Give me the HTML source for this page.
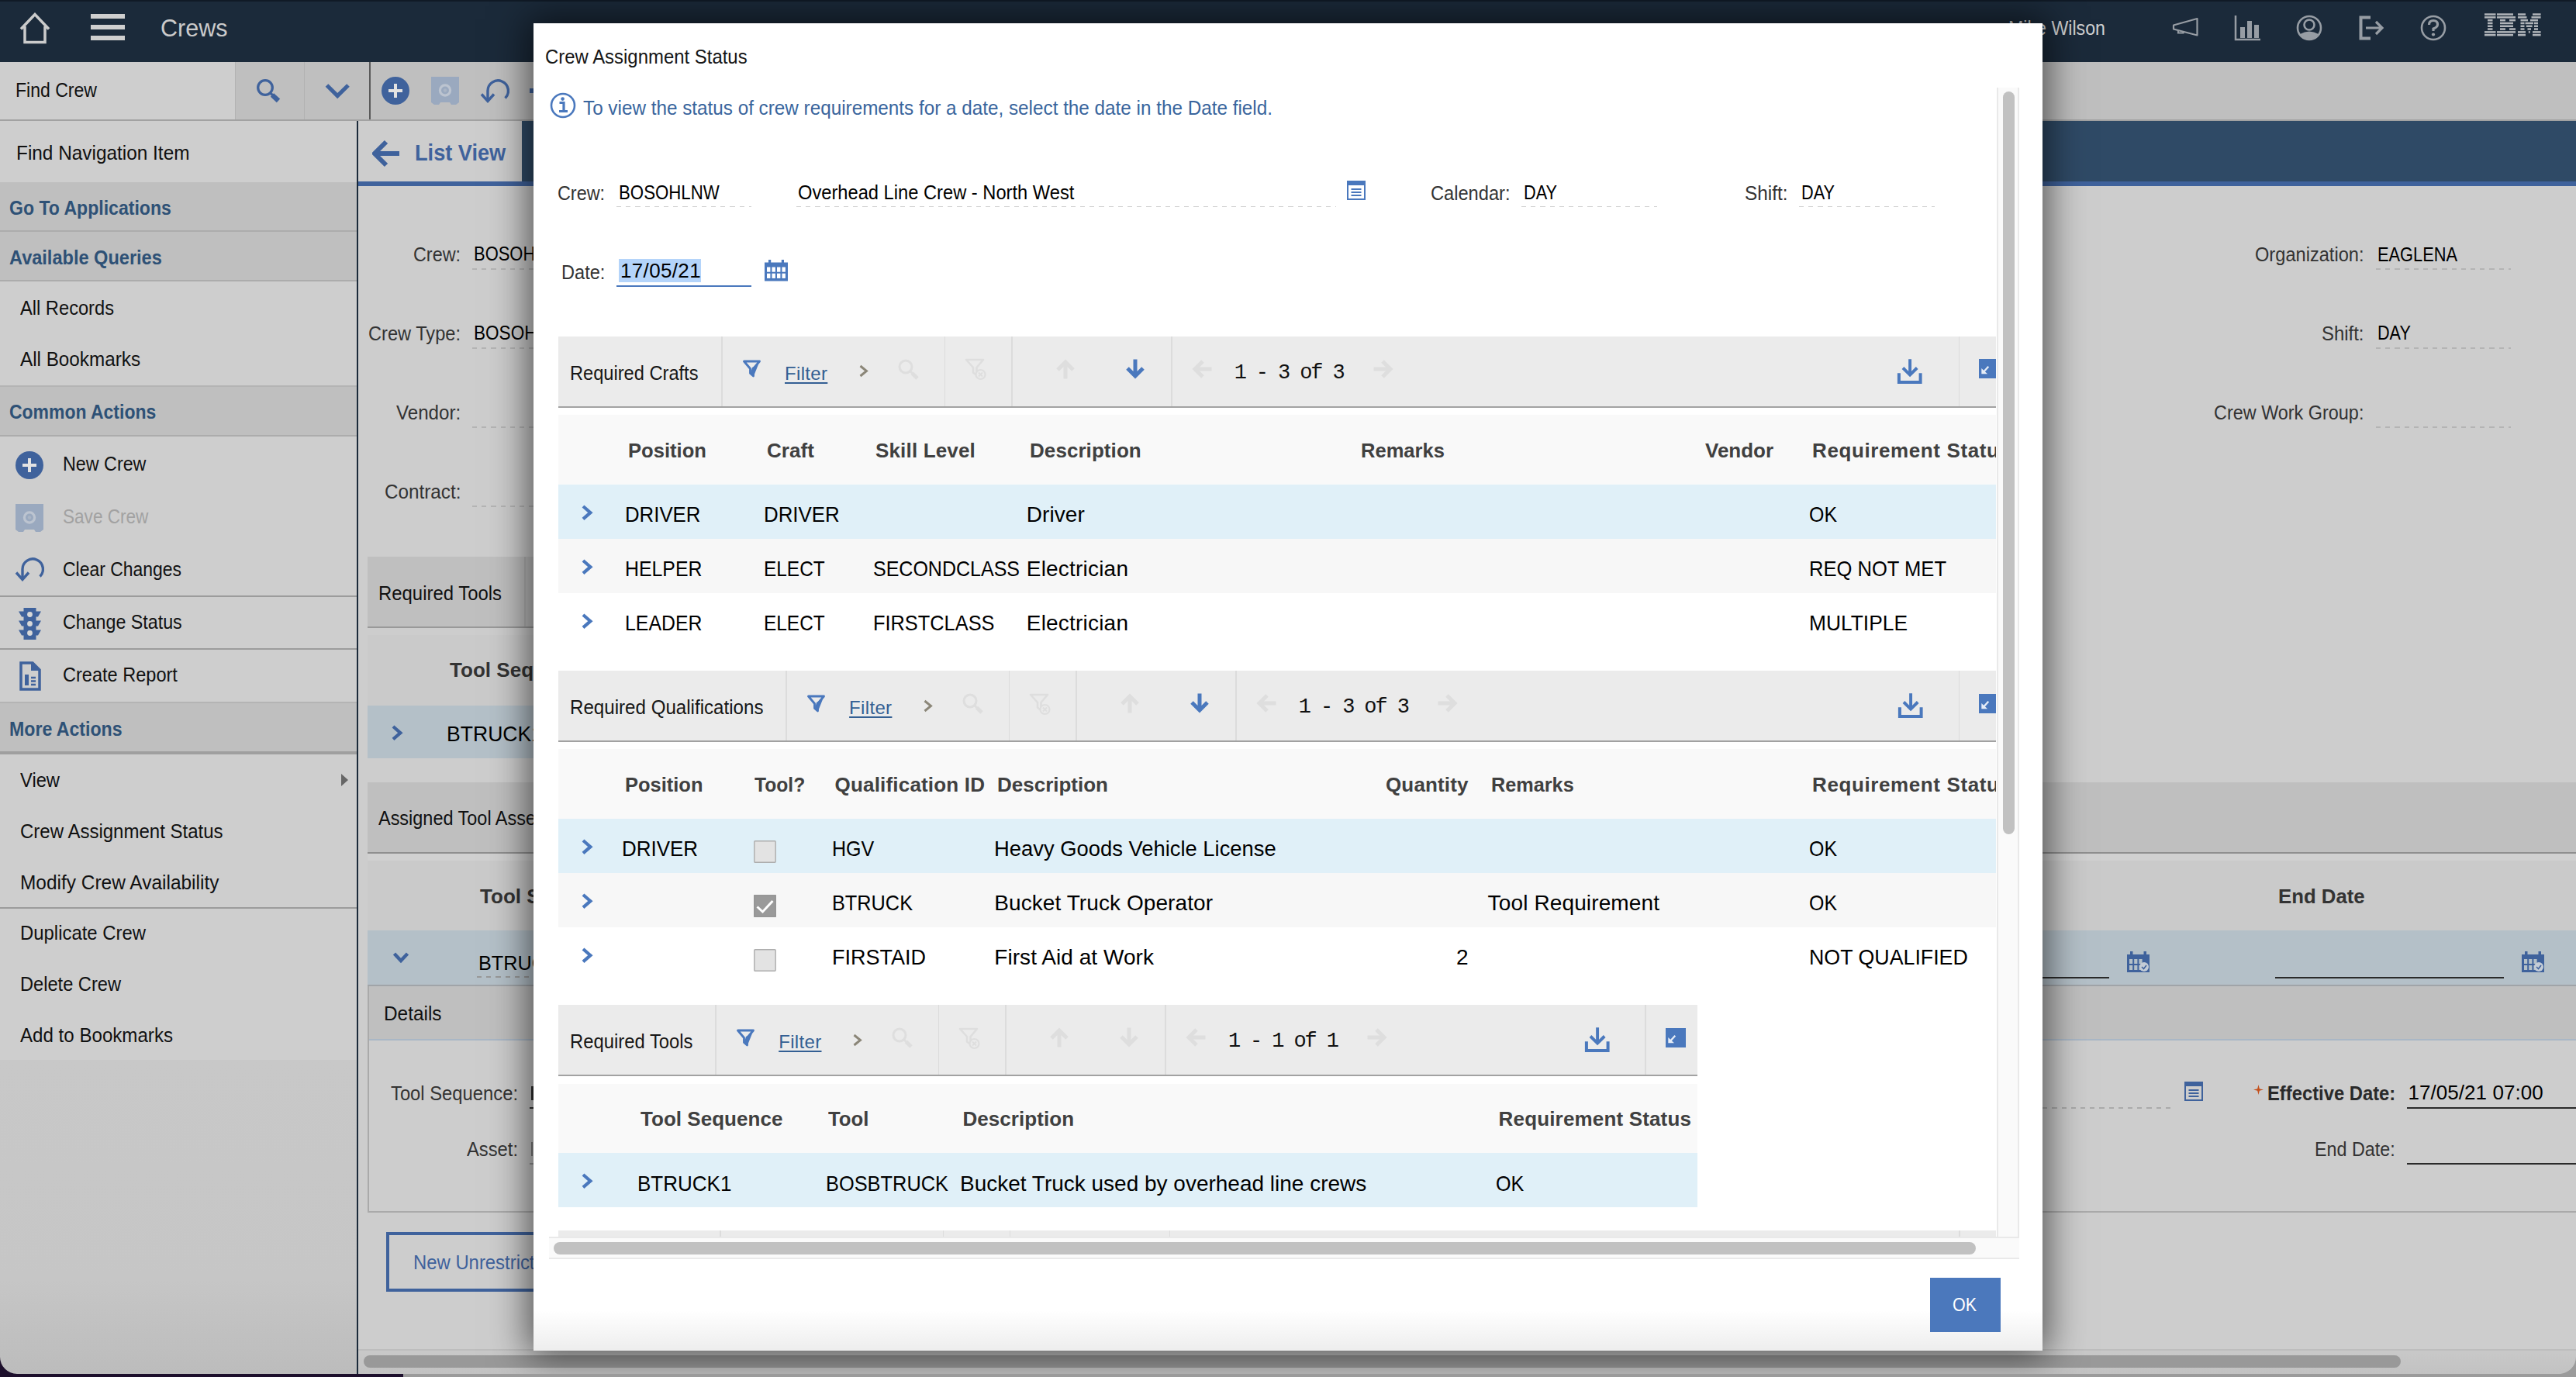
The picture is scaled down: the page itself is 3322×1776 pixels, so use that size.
<!DOCTYPE html>
<html><head><meta charset="utf-8"><title>Crews</title>
<style>
html,body{margin:0;padding:0}
html{overflow:hidden;width:3322px;height:1776px}
body{width:3322px;height:1776px;overflow:hidden;position:relative;background:#cdcdcd;font-family:"Liberation Sans",sans-serif}
div,span,svg{position:absolute;display:block}
</style></head><body>
<div style="left:0px;top:0px;width:3322px;height:80px;background:#1b2a3a;"></div>
<div style="left:0px;top:0px;width:3322px;height:2px;background:#101a26;"></div>
<svg style="left:23px;top:14px;" width="44" height="46" viewBox="0 0 44 46"><path d="M4 23.5 L22 4.5 L40 23.5 M9 20 V40.5 H35 V20" fill="none" stroke="#cbcbcb" stroke-width="3.5" stroke-linejoin="miter"/></svg>
<div style="left:117px;top:18px;width:44px;height:6px;background:#cfcfcf;"></div>
<div style="left:117px;top:32px;width:44px;height:6px;background:#cfcfcf;"></div>
<div style="left:117px;top:46px;width:44px;height:6px;background:#cfcfcf;"></div>
<span style="left:206.5px;top:21.4px;font:400 31px/31px 'Liberation Sans',sans-serif;color:#cbcbcb;white-space:pre;transform:scaleX(0.9848);transform-origin:0 0;">Crews</span>
<span style="left:2590px;top:22.9px;font:400 26px/26px 'Liberation Sans',sans-serif;color:#d0d0d0;white-space:pre;transform:scaleX(0.8920);transform-origin:0 0;">Mike Wilson</span>
<svg style="left:2799px;top:20px;" width="38" height="30" viewBox="0 0 38 30"><path d="M4 12.5 L34.5 4 V25.5 L4 17.5 Z" fill="none" stroke="#979da4" stroke-width="2.2" stroke-linejoin="round"/><path d="M10 19 V22.5 H16.5 V20.5" fill="none" stroke="#979da4" stroke-width="2.2"/></svg>
<svg style="left:2880px;top:18px;" width="38" height="36" viewBox="0 0 38 36"><path d="M3 2 V33 H35" fill="none" stroke="#979da4" stroke-width="2.5"/><rect x="9" y="17" width="6" height="14" fill="#979da4"/><rect x="18" y="9" width="6" height="22" fill="#979da4"/><rect x="27" y="14" width="6" height="17" fill="#979da4"/></svg>
<svg style="left:2960px;top:18px;" width="36" height="36" viewBox="0 0 36 36"><circle cx="18" cy="18" r="15" fill="none" stroke="#979da4" stroke-width="2.6"/><circle cx="18" cy="14" r="6.5" fill="none" stroke="#979da4" stroke-width="2.6"/><path d="M6 26 Q18 19 30 26 Q24 33 18 33 Q12 33 6 26Z" fill="#979da4"/></svg>
<svg style="left:3040px;top:18px;" width="36" height="36" viewBox="0 0 36 36"><path d="M17 4.5 H4.5 V31.5 H17" fill="none" stroke="#979da4" stroke-width="4"/><path d="M11 18 H32 M24 10 L32 18 L24 26" fill="none" stroke="#979da4" stroke-width="3.2"/></svg>
<svg style="left:3120px;top:18px;" width="36" height="36" viewBox="0 0 36 36"><circle cx="18" cy="18" r="15" fill="none" stroke="#979da4" stroke-width="2.6"/><path d="M12.5 14 Q12.5 8.5 18 8.5 Q23.5 8.5 23.5 13.5 Q23.5 17 18 19 V22" fill="none" stroke="#979da4" stroke-width="3.2"/><circle cx="18" cy="26.5" r="2.1" fill="#979da4"/></svg>
<svg style="left:3203.5px;top:17px;" width="73" height="31" viewBox="0 0 73 31"><rect x="0" y="0.3" width="14.5" height="2.5" fill="#b0b4b9"/><rect x="16" y="0.3" width="21" height="2.5" fill="#b0b4b9"/><rect x="43" y="0.3" width="10" height="2.5" fill="#b0b4b9"/><rect x="62" y="0.3" width="10.599999999999994" height="2.5" fill="#b0b4b9"/><rect x="0" y="4.1" width="14.5" height="2.5" fill="#b0b4b9"/><rect x="16" y="4.1" width="24" height="2.5" fill="#b0b4b9"/><rect x="43" y="4.1" width="11.5" height="2.5" fill="#b0b4b9"/><rect x="60.5" y="4.1" width="12.099999999999994" height="2.5" fill="#b0b4b9"/><rect x="4" y="7.9" width="6.5" height="2.5" fill="#b0b4b9"/><rect x="20" y="7.9" width="7" height="2.5" fill="#b0b4b9"/><rect x="32" y="7.9" width="8" height="2.5" fill="#b0b4b9"/><rect x="46.5" y="7.9" width="9.5" height="2.5" fill="#b0b4b9"/><rect x="59" y="7.9" width="10" height="2.5" fill="#b0b4b9"/><rect x="4" y="11.7" width="6.5" height="2.5" fill="#b0b4b9"/><rect x="20" y="11.7" width="17" height="2.5" fill="#b0b4b9"/><rect x="46.5" y="11.7" width="5.0" height="2.5" fill="#b0b4b9"/><rect x="52.5" y="11.7" width="10.5" height="2.5" fill="#b0b4b9"/><rect x="64" y="11.7" width="5" height="2.5" fill="#b0b4b9"/><rect x="4" y="15.5" width="6.5" height="2.5" fill="#b0b4b9"/><rect x="20" y="15.5" width="17" height="2.5" fill="#b0b4b9"/><rect x="46.5" y="15.5" width="5.0" height="2.5" fill="#b0b4b9"/><rect x="53.8" y="15.5" width="7.800000000000004" height="2.5" fill="#b0b4b9"/><rect x="64" y="15.5" width="5" height="2.5" fill="#b0b4b9"/><rect x="4" y="19.3" width="6.5" height="2.5" fill="#b0b4b9"/><rect x="20" y="19.3" width="7" height="2.5" fill="#b0b4b9"/><rect x="32" y="19.3" width="8" height="2.5" fill="#b0b4b9"/><rect x="46.5" y="19.3" width="5.0" height="2.5" fill="#b0b4b9"/><rect x="55.5" y="19.3" width="4.5" height="2.5" fill="#b0b4b9"/><rect x="64" y="19.3" width="5" height="2.5" fill="#b0b4b9"/><rect x="0" y="23.1" width="14.5" height="2.5" fill="#b0b4b9"/><rect x="16" y="23.1" width="24" height="2.5" fill="#b0b4b9"/><rect x="43" y="23.1" width="10" height="2.5" fill="#b0b4b9"/><rect x="56.8" y="23.1" width="2.0" height="2.5" fill="#b0b4b9"/><rect x="62" y="23.1" width="10.599999999999994" height="2.5" fill="#b0b4b9"/><rect x="0" y="26.9" width="14.5" height="2.5" fill="#b0b4b9"/><rect x="16" y="26.9" width="21" height="2.5" fill="#b0b4b9"/><rect x="43" y="26.9" width="10" height="2.5" fill="#b0b4b9"/><rect x="62" y="26.9" width="10.599999999999994" height="2.5" fill="#b0b4b9"/></svg>
<div style="left:0px;top:80px;width:3322px;height:74px;background:#bfbfbf;"></div>
<div style="left:0px;top:80px;width:303px;height:74px;background:#cecece;"></div>
<div style="left:303px;top:80px;width:1px;height:74px;background:#b2b2b2;"></div>
<div style="left:392px;top:80px;width:1px;height:74px;background:#b2b2b2;"></div>
<div style="left:476px;top:80px;width:2px;height:74px;background:#5a5a5a;"></div>
<div style="left:0px;top:154px;width:3322px;height:2px;background:#a2a2a2;"></div>
<span style="left:19.5px;top:102.9px;font:400 26px/26px 'Liberation Sans',sans-serif;color:#111;white-space:pre;transform:scaleX(0.8863);transform-origin:0 0;">Find Crew</span>
<svg style="left:325px;top:98px;" width="40" height="38" viewBox="0 0 40 38"><circle cx="17" cy="15" r="9.3" fill="none" stroke="#3f629c" stroke-width="3.3"/><path d="M23.5 22 L27 25" stroke="#3f629c" stroke-width="3.3"/><path d="M26 24.5 L34 31.8" stroke="#3f629c" stroke-width="6.4"/></svg>
<svg style="left:416px;top:102px;" width="40" height="28" viewBox="0 0 40 28"><path d="M5.5 8 L19.2 21.5 L33 8" fill="none" stroke="#3f629c" stroke-width="5.2"/></svg>
<svg style="left:492px;top:99px;" width="36" height="36" viewBox="0 0 36 36"><circle cx="18" cy="18" r="18" fill="#3f629c"/><path d="M9 18 H27 M18 9 V27" stroke="#e2e2e2" stroke-width="4"/></svg>
<svg style="left:556px;top:99px;" width="36" height="36" viewBox="0 0 36 36"><path d="M0 0 H36 V33 L32 36 H26 L24 33 H12 L10 36 H4 L0 33 Z" fill="#9aa9bf"/><circle cx="18" cy="17.5" r="6.6" fill="none" stroke="#bcc4d0" stroke-width="3.2"/><circle cx="18" cy="17.5" r="2.2" fill="#aab5c5"/></svg>
<svg style="left:619px;top:100px;" width="38" height="34" viewBox="0 0 38 34"><path d="M10 29 V17 A13.2 13.2 0 1 1 32.5 26.5" fill="none" stroke="#3f629c" stroke-width="3.4"/><path d="M2 21.5 L10 30.5 L18 21.5" fill="none" stroke="#3f629c" stroke-width="3.4"/></svg>
<div style="left:683px;top:114px;width:6px;height:6px;background:#3f629c;"></div>
<div style="left:0px;top:156px;width:460px;height:1616px;background:#cecece;"></div>
<div style="left:0px;top:1367px;width:460px;height:405px;background:linear-gradient(180deg,#c8c8c8 0%,#c6c6c6 70%,#bcbcbc 100%);"></div>
<div style="left:460px;top:156px;width:2px;height:1616px;background:#1b2a3a;"></div>
<span style="left:20.5px;top:183.9px;font:400 26px/26px 'Liberation Sans',sans-serif;color:#111;white-space:pre;transform:scaleX(0.9373);transform-origin:0 0;">Find Navigation Item</span>
<div style="left:0px;top:235px;width:460px;height:64px;background:#bfbfbf;"></div>
<div style="left:0px;top:297px;width:460px;height:2px;background:#acacac;"></div>
<span style="left:12.2px;top:254.9px;font:700 26px/26px 'Liberation Sans',sans-serif;color:#2e5176;white-space:pre;transform:scaleX(0.8869);transform-origin:0 0;">Go To Applications</span>
<div style="left:0px;top:299px;width:460px;height:64px;background:#bfbfbf;"></div>
<div style="left:0px;top:361px;width:460px;height:2px;background:#acacac;"></div>
<span style="left:12.2px;top:318.9px;font:700 26px/26px 'Liberation Sans',sans-serif;color:#2e5176;white-space:pre;transform:scaleX(0.9058);transform-origin:0 0;">Available Queries</span>
<span style="left:26px;top:384.4px;font:400 26px/26px 'Liberation Sans',sans-serif;color:#111;white-space:pre;transform:scaleX(0.9102);transform-origin:0 0;">All Records</span>
<span style="left:26px;top:449.9px;font:400 26px/26px 'Liberation Sans',sans-serif;color:#111;white-space:pre;transform:scaleX(0.9329);transform-origin:0 0;">All Bookmarks</span>
<div style="left:0px;top:497px;width:460px;height:2px;background:#b4b4b4;"></div>
<div style="left:0px;top:499px;width:460px;height:64px;background:#bfbfbf;"></div>
<div style="left:0px;top:561px;width:460px;height:2px;background:#acacac;"></div>
<span style="left:12.2px;top:518.4px;font:700 26px/26px 'Liberation Sans',sans-serif;color:#2e5176;white-space:pre;transform:scaleX(0.8830);transform-origin:0 0;">Common Actions</span>
<svg style="left:19.8px;top:582px;" width="36" height="36" viewBox="0 0 36 36"><circle cx="18" cy="18" r="18" fill="#3f629c"/><path d="M9 18 H27 M18 9 V27" stroke="#e2e2e2" stroke-width="4"/></svg>
<span style="left:80.6px;top:585.4px;font:400 26px/26px 'Liberation Sans',sans-serif;color:#111;white-space:pre;transform:scaleX(0.8957);transform-origin:0 0;">New Crew</span>
<svg style="left:20px;top:650px;" width="36" height="36" viewBox="0 0 36 36"><path d="M0 0 H36 V33 L32 36 H26 L24 33 H12 L10 36 H4 L0 33 Z" fill="#9aa9bf"/><circle cx="18" cy="17.5" r="6.6" fill="none" stroke="#bcc4d0" stroke-width="3.2"/><circle cx="18" cy="17.5" r="2.2" fill="#aab5c5"/></svg>
<span style="left:80.6px;top:652.9px;font:400 26px/26px 'Liberation Sans',sans-serif;color:#a2a2a2;white-space:pre;transform:scaleX(0.8682);transform-origin:0 0;">Save Crew</span>
<svg style="left:19px;top:717px;" width="38" height="34" viewBox="0 0 38 34"><path d="M10 29 V17 A13.2 13.2 0 1 1 32.5 26.5" fill="none" stroke="#3f629c" stroke-width="3.4"/><path d="M2 21.5 L10 30.5 L18 21.5" fill="none" stroke="#3f629c" stroke-width="3.4"/></svg>
<span style="left:80.6px;top:720.9px;font:400 26px/26px 'Liberation Sans',sans-serif;color:#111;white-space:pre;transform:scaleX(0.8816);transform-origin:0 0;">Clear Changes</span>
<div style="left:0px;top:768px;width:460px;height:2px;background:#9c9c9c;"></div>
<svg style="left:23.5px;top:783.5px;" width="29" height="41" viewBox="0 0 29 41"><rect x="6.5" y="0" width="16" height="41" fill="#3f629c"/><path d="M0 4.5 H7 V11.5 L4 11.5 Z M29 4.5 H22 V11.5 L25 11.5 Z M0 16.5 H7 V23.5 L4 23.5 Z M29 16.5 H22 V23.5 L25 23.5 Z M0 28.5 H7 V35.5 L4 35.5 Z M29 28.5 H22 V35.5 L25 35.5 Z" fill="#3f629c"/><circle cx="14.5" cy="8.5" r="3.4" fill="#d8d8d8"/><circle cx="14.5" cy="20.5" r="3.4" fill="#d8d8d8"/><circle cx="14.5" cy="32.5" r="3.4" fill="#d8d8d8"/></svg>
<span style="left:80.6px;top:788.9px;font:400 26px/26px 'Liberation Sans',sans-serif;color:#111;white-space:pre;transform:scaleX(0.8936);transform-origin:0 0;">Change Status</span>
<div style="left:0px;top:836px;width:460px;height:2px;background:#9c9c9c;"></div>
<svg style="left:25px;top:853px;" width="28" height="38" viewBox="0 0 28 38"><path d="M2 2 H17 L26 11 V36 H2 Z" fill="none" stroke="#3f629c" stroke-width="3.5"/><path d="M15 2 L26 12 H15 Z" fill="#3f629c"/><rect x="7" y="17" width="5" height="14" fill="#3f629c"/><path d="M15 21 H21 M15 25.5 H21 M15 30 H21" stroke="#3f629c" stroke-width="2.4"/></svg>
<span style="left:80.6px;top:856.9px;font:400 26px/26px 'Liberation Sans',sans-serif;color:#111;white-space:pre;transform:scaleX(0.9057);transform-origin:0 0;">Create Report</span>
<div style="left:0px;top:905px;width:460px;height:2px;background:#b4b4b4;"></div>
<div style="left:0px;top:907px;width:460px;height:66px;background:#bfbfbf;"></div>
<div style="left:0px;top:969px;width:460px;height:4px;background:#9f9f9f;"></div>
<span style="left:12.2px;top:926.9px;font:700 26px/26px 'Liberation Sans',sans-serif;color:#2e5176;white-space:pre;transform:scaleX(0.8893);transform-origin:0 0;">More Actions</span>
<span style="left:26px;top:992.9px;font:400 26px/26px 'Liberation Sans',sans-serif;color:#111;white-space:pre;transform:scaleX(0.9126);transform-origin:0 0;">View</span>
<svg style="left:439px;top:997px;" width="12" height="18" viewBox="0 0 12 18"><path d="M1 1 L10 9 L1 17 Z" fill="#666"/></svg>
<span style="left:26px;top:1058.9px;font:400 26px/26px 'Liberation Sans',sans-serif;color:#111;white-space:pre;transform:scaleX(0.9236);transform-origin:0 0;">Crew Assignment Status</span>
<span style="left:26px;top:1124.9px;font:400 26px/26px 'Liberation Sans',sans-serif;color:#111;white-space:pre;transform:scaleX(0.9405);transform-origin:0 0;">Modify Crew Availability</span>
<div style="left:0px;top:1170px;width:460px;height:2px;background:#9c9c9c;"></div>
<span style="left:26px;top:1190.4px;font:400 26px/26px 'Liberation Sans',sans-serif;color:#111;white-space:pre;transform:scaleX(0.9190);transform-origin:0 0;">Duplicate Crew</span>
<span style="left:26px;top:1256.4px;font:400 26px/26px 'Liberation Sans',sans-serif;color:#111;white-space:pre;transform:scaleX(0.9088);transform-origin:0 0;">Delete Crew</span>
<span style="left:26px;top:1322.4px;font:400 26px/26px 'Liberation Sans',sans-serif;color:#111;white-space:pre;transform:scaleX(0.9274);transform-origin:0 0;">Add to Bookmarks</span>
<div style="left:673px;top:156px;width:2649px;height:78px;background:#2f4a66;"></div>
<div style="left:462px;top:234px;width:2860px;height:6px;background:#3f629c;"></div>
<svg style="left:480px;top:180px;" width="36" height="36" viewBox="0 0 36 36"><path d="M18 3 L3 18 L18 33 M3 18 H35" fill="none" stroke="#3f629c" stroke-width="6"/></svg>
<span style="left:534.8px;top:183.4px;font:700 29px/29px 'Liberation Sans',sans-serif;color:#3f629c;white-space:pre;transform:scaleX(0.9363);transform-origin:0 0;">List View</span>
<span style="left:532.6px;top:315.4px;font:400 26px/26px 'Liberation Sans',sans-serif;color:#333;white-space:pre;transform:scaleX(0.8984);transform-origin:0 0;">Crew:</span>
<span style="left:475px;top:416.9px;font:400 26px/26px 'Liberation Sans',sans-serif;color:#333;white-space:pre;transform:scaleX(0.9083);transform-origin:0 0;">Crew Type:</span>
<span style="left:510.8px;top:518.9px;font:400 26px/26px 'Liberation Sans',sans-serif;color:#333;white-space:pre;transform:scaleX(0.9283);transform-origin:0 0;">Vendor:</span>
<span style="left:495.5px;top:621.4px;font:400 26px/26px 'Liberation Sans',sans-serif;color:#333;white-space:pre;transform:scaleX(0.9338);transform-origin:0 0;">Contract:</span>
<span style="left:611px;top:314.4px;font:400 26px/26px 'Liberation Sans',sans-serif;color:#000;white-space:pre;transform:scaleX(0.8439);transform-origin:0 0;">BOSOHLNW</span>
<span style="left:611px;top:416.4px;font:400 26px/26px 'Liberation Sans',sans-serif;color:#000;white-space:pre;transform:scaleX(0.8674);transform-origin:0 0;">BOSOHL</span>
<div style="left:609px;top:346.2px;width:191px;height:1.8px;background:repeating-linear-gradient(90deg,#b4b4b4 0 6.2px,transparent 6.2px 12.2px);"></div>
<div style="left:609px;top:448.2px;width:191px;height:1.8px;background:repeating-linear-gradient(90deg,#b4b4b4 0 6.2px,transparent 6.2px 12.2px);"></div>
<div style="left:609px;top:550.2px;width:191px;height:1.8px;background:repeating-linear-gradient(90deg,#b4b4b4 0 6.2px,transparent 6.2px 12.2px);"></div>
<div style="left:609px;top:652.2px;width:191px;height:1.8px;background:repeating-linear-gradient(90deg,#b4b4b4 0 6.2px,transparent 6.2px 12.2px);"></div>
<span style="left:2907.5px;top:315.4px;font:400 26px/26px 'Liberation Sans',sans-serif;color:#333;white-space:pre;transform:scaleX(0.9085);transform-origin:0 0;">Organization:</span>
<span style="left:3066px;top:314.9px;font:400 26px/26px 'Liberation Sans',sans-serif;color:#000;white-space:pre;transform:scaleX(0.8386);transform-origin:0 0;">EAGLENA</span>
<div style="left:3064px;top:346.2px;width:174px;height:1.8px;background:repeating-linear-gradient(90deg,#b4b4b4 0 6.2px,transparent 6.2px 12.2px);"></div>
<span style="left:2993.5px;top:416.9px;font:400 26px/26px 'Liberation Sans',sans-serif;color:#333;white-space:pre;transform:scaleX(0.9198);transform-origin:0 0;">Shift:</span>
<span style="left:3066px;top:416.4px;font:400 26px/26px 'Liberation Sans',sans-serif;color:#000;white-space:pre;transform:scaleX(0.8306);transform-origin:0 0;">DAY</span>
<div style="left:3064px;top:448.2px;width:174px;height:1.8px;background:repeating-linear-gradient(90deg,#b4b4b4 0 6.2px,transparent 6.2px 12.2px);"></div>
<span style="left:2854.6px;top:519.4px;font:400 26px/26px 'Liberation Sans',sans-serif;color:#333;white-space:pre;transform:scaleX(0.9004);transform-origin:0 0;">Crew Work Group:</span>
<div style="left:3064px;top:549.8px;width:174px;height:1.8px;background:repeating-linear-gradient(90deg,#b4b4b4 0 6.2px,transparent 6.2px 12.2px);"></div>
<div style="left:474px;top:718px;width:2100px;height:90px;background:#bfbfbf;"></div>
<div style="left:474px;top:808px;width:2100px;height:2px;background:#999;"></div>
<div style="left:676px;top:718px;width:2px;height:90px;background:#b2b2b2;"></div>
<span style="left:488px;top:751.9px;font:400 26px/26px 'Liberation Sans',sans-serif;color:#111;white-space:pre;transform:scaleX(0.9193);transform-origin:0 0;">Required Tools</span>
<div style="left:474px;top:819px;width:2100px;height:91px;background:#cacaca;"></div>
<span style="left:580px;top:851.4px;font:700 26px/26px 'Liberation Sans',sans-serif;color:#333;letter-spacing:0.03px;white-space:pre;">Tool Sequence</span>
<div style="left:474px;top:910px;width:2100px;height:68px;background:#b4c0c8;"></div>
<svg style="left:503.8px;top:934.3px;" width="16.4" height="22.4" viewBox="0 0 16.4 22.4"><path d="M3 3 L12.4 11.2 L3 19.4" fill="none" stroke="#3f629c" stroke-width="4.2"/></svg>
<span style="left:576px;top:932.9px;font:400 28px/28px 'Liberation Sans',sans-serif;color:#000;white-space:pre;transform:scaleX(0.9488);transform-origin:0 0;">BTRUCK1</span>
<div style="left:474px;top:1009px;width:2848px;height:90px;background:#bfbfbf;"></div>
<div style="left:474px;top:1099px;width:2848px;height:2px;background:#8f8f8f;"></div>
<span style="left:488px;top:1041.9px;font:400 26px/26px 'Liberation Sans',sans-serif;color:#111;white-space:pre;transform:scaleX(0.9022);transform-origin:0 0;">Assigned Tool Asse</span>
<div style="left:474px;top:1101px;width:2848px;height:9px;background:#d0d0d0;"></div>
<div style="left:474px;top:1110px;width:2848px;height:90px;background:#cacaca;"></div>
<span style="left:619px;top:1142.9px;font:700 26px/26px 'Liberation Sans',sans-serif;color:#333;letter-spacing:0.03px;white-space:pre;">Tool Sequence</span>
<span style="left:2938px;top:1142.9px;font:700 26px/26px 'Liberation Sans',sans-serif;color:#333;white-space:pre;transform:scaleX(0.9913);transform-origin:0 0;">End Date</span>
<div style="left:474px;top:1200px;width:2848px;height:70px;background:#b4c0c8;"></div>
<div style="left:474px;top:1270px;width:2848px;height:2px;background:#a0a4a8;"></div>
<svg style="left:505px;top:1225px;" width="24" height="20" viewBox="0 0 24 20"><path d="M3.5 5 L12 14 L20.5 5" fill="none" stroke="#3f629c" stroke-width="4.4"/></svg>
<span style="left:617px;top:1228.9px;font:400 26px/26px 'Liberation Sans',sans-serif;color:#000;white-space:pre;transform:scaleX(0.9724);transform-origin:0 0;">BTRUCK1</span>
<div style="left:615px;top:1259px;width:145px;height:1.8px;background:repeating-linear-gradient(90deg,#999 0 6.2px,transparent 6.2px 12.2px);"></div>
<div style="left:2500px;top:1259.5px;width:219.6px;height:2px;background:#2a2a2a;"></div>
<div style="left:2934px;top:1259.5px;width:295.4px;height:2px;background:#2a2a2a;"></div>
<svg style="left:2742.5px;top:1226.5px;" width="29" height="27" viewBox="0 0 29 27"><rect x="0" y="4" width="29" height="23" fill="#3f629c"/><rect x="4" y="0" width="3.5" height="7" fill="#3f629c"/><rect x="21.5" y="0" width="3.5" height="7" fill="#3f629c"/><rect x="3.0" y="10" width="4.2" height="6" fill="#b4c0c8"/><rect x="3.0" y="18" width="4.2" height="6" fill="#b4c0c8"/><rect x="9.2" y="10" width="4.2" height="6" fill="#b4c0c8"/><rect x="9.2" y="18" width="4.2" height="6" fill="#b4c0c8"/><rect x="15.4" y="10" width="4.2" height="6" fill="#b4c0c8"/><rect x="15.4" y="18" width="4.2" height="6" fill="#b4c0c8"/><circle cx="22" cy="20" r="6" fill="#c4ccd6"/><path d="M19 20 L21.5 22.5 L25 18" fill="none" stroke="#3f629c" stroke-width="1.6"/></svg>
<svg style="left:3251.5px;top:1226.5px;" width="29" height="27" viewBox="0 0 29 27"><rect x="0" y="4" width="29" height="23" fill="#3f629c"/><rect x="4" y="0" width="3.5" height="7" fill="#3f629c"/><rect x="21.5" y="0" width="3.5" height="7" fill="#3f629c"/><rect x="3.0" y="10" width="4.2" height="6" fill="#b4c0c8"/><rect x="3.0" y="18" width="4.2" height="6" fill="#b4c0c8"/><rect x="9.2" y="10" width="4.2" height="6" fill="#b4c0c8"/><rect x="9.2" y="18" width="4.2" height="6" fill="#b4c0c8"/><rect x="15.4" y="10" width="4.2" height="6" fill="#b4c0c8"/><rect x="15.4" y="18" width="4.2" height="6" fill="#b4c0c8"/><circle cx="22" cy="20" r="6" fill="#c4ccd6"/><path d="M19 20 L21.5 22.5 L25 18" fill="none" stroke="#3f629c" stroke-width="1.6"/></svg>
<div style="left:474px;top:1272px;width:2900px;height:292px;background:#aaa;"></div>
<div style="left:476px;top:1272px;width:2900px;height:290px;background:#cdcdcd;"></div>
<div style="left:476px;top:1272px;width:2900px;height:68px;background:#bfbfbf;"></div>
<div style="left:476px;top:1340px;width:2900px;height:2px;background:#a9b7c6;"></div>
<span style="left:494.5px;top:1293.9px;font:400 26px/26px 'Liberation Sans',sans-serif;color:#111;white-space:pre;transform:scaleX(0.9374);transform-origin:0 0;">Details</span>
<span style="left:504px;top:1396.9px;font:400 26px/26px 'Liberation Sans',sans-serif;color:#333;white-space:pre;transform:scaleX(0.9149);transform-origin:0 0;">Tool Sequence:</span>
<span style="left:602px;top:1468.9px;font:400 26px/26px 'Liberation Sans',sans-serif;color:#333;white-space:pre;transform:scaleX(0.9135);transform-origin:0 0;">Asset:</span>
<div style="left:685px;top:1401px;width:2.5px;height:18px;background:#333;"></div>
<div style="left:685px;top:1473px;width:2px;height:18px;background:#808080;"></div>
<div style="left:683px;top:1428px;width:6px;height:2px;background:#333;"></div>
<div style="left:683px;top:1500px;width:6px;height:2px;background:#999;"></div>
<div style="left:2500px;top:1428px;width:303px;height:1.8px;background:repeating-linear-gradient(90deg,#aaa 0 6.2px,transparent 6.2px 12.2px);"></div>
<svg style="left:2817px;top:1394.5px;" width="24" height="25" viewBox="0 0 24 25"><rect x="1" y="1" width="22" height="23" fill="#cdcdcd" stroke="#3f629c" stroke-width="2"/><rect x="0" y="0" width="24" height="6" fill="#3f629c"/><path d="M5.5 11 H18.5 M5.5 15 H18.5 M5.5 19 H18.5" stroke="#3f629c" stroke-width="1.8"/></svg>
<svg style="left:2905.5px;top:1398.5px;" width="13" height="13" viewBox="0 0 13 13"><path d="M6.5 0 L7.8 5.2 L13 6.5 L7.8 7.8 L6.5 13 L5.2 7.8 L0 6.5 L5.2 5.2 Z" fill="#c4501c"/></svg>
<span style="left:2923.6px;top:1396.9px;font:700 26px/26px 'Liberation Sans',sans-serif;color:#2a2a2a;white-space:pre;transform:scaleX(0.9146);transform-origin:0 0;">Effective Date:</span>
<span style="left:3105.6px;top:1396.4px;font:400 26px/26px 'Liberation Sans',sans-serif;color:#000;letter-spacing:0.04px;white-space:pre;">17/05/21 07:00</span>
<div style="left:3104px;top:1428px;width:218px;height:2px;background:#2a2a2a;"></div>
<span style="left:2985px;top:1469.4px;font:400 26px/26px 'Liberation Sans',sans-serif;color:#333;white-space:pre;transform:scaleX(0.8977);transform-origin:0 0;">End Date:</span>
<div style="left:3104px;top:1499.5px;width:218px;height:2px;background:#2a2a2a;"></div>
<div style="left:498px;top:1588.5px;width:420px;height:77px;background:transparent;border:4px solid #3f629c;box-sizing:border-box"></div>
<span style="left:532.5px;top:1614.9px;font:400 26px/26px 'Liberation Sans',sans-serif;color:#3f629c;white-space:pre;transform:scaleX(0.9180);transform-origin:0 0;">New Unrestrict</span>
<div style="left:462px;top:1740px;width:2860px;height:32px;background:linear-gradient(180deg,#c9c9c9,#c2c2c2);"></div>
<div style="left:462px;top:1740px;width:2860px;height:2px;background:#bdbdbd;"></div>
<div style="left:468.5px;top:1748px;width:2627.5px;height:16px;background:#999;border-radius:8px"></div>
<div style="left:688px;top:30px;width:1946px;height:1711.5px;background:#fff;box-shadow:0 0 46px 6px rgba(0,0,0,.62)"></div>
<div style="left:688px;top:1690px;width:1946px;height:51.5px;background:linear-gradient(180deg,rgba(0,0,0,0),rgba(0,0,0,.07));"></div>
<span style="left:702.7px;top:60.4px;font:400 26px/26px 'Liberation Sans',sans-serif;color:#161616;white-space:pre;transform:scaleX(0.9201);transform-origin:0 0;">Crew Assignment Status</span>
<svg style="left:708px;top:118px;" width="36" height="36" viewBox="0 0 36 36"><circle cx="18" cy="18" r="15" fill="none" stroke="#4a78bd" stroke-width="2.6"/><path d="M13.5 14.5 H19 V25 M13 25.5 H24" fill="none" stroke="#4a78bd" stroke-width="3.2"/><circle cx="17.6" cy="9.6" r="2.3" fill="#4a78bd"/></svg>
<span style="left:752px;top:126.4px;font:400 26px/26px 'Liberation Sans',sans-serif;color:#39659d;white-space:pre;transform:scaleX(0.9334);transform-origin:0 0;">To view the status of crew requirements for a date, select the date in the Date field.</span>
<span style="left:719px;top:236.4px;font:400 26px/26px 'Liberation Sans',sans-serif;color:#333;white-space:pre;transform:scaleX(0.8984);transform-origin:0 0;">Crew:</span>
<span style="left:797.7px;top:234.9px;font:400 26px/26px 'Liberation Sans',sans-serif;color:#000;white-space:pre;transform:scaleX(0.8557);transform-origin:0 0;">BOSOHLNW</span>
<div style="left:795px;top:265.5px;width:173.5px;height:1.8px;background:repeating-linear-gradient(90deg,#d0d0d0 0 6.2px,transparent 6.2px 12.2px);"></div>
<span style="left:1028.7px;top:234.9px;font:400 26px/26px 'Liberation Sans',sans-serif;color:#000;white-space:pre;transform:scaleX(0.9110);transform-origin:0 0;">Overhead Line Crew - North West</span>
<div style="left:1027px;top:265.5px;width:695.5px;height:1.8px;background:repeating-linear-gradient(90deg,#d0d0d0 0 6.2px,transparent 6.2px 12.2px);"></div>
<svg style="left:1737px;top:233px;" width="24" height="25" viewBox="0 0 24 25"><rect x="1" y="1" width="22" height="23" fill="#fff" stroke="#4a78bd" stroke-width="2"/><rect x="0" y="0" width="24" height="6" fill="#4a78bd"/><path d="M5.5 11 H18.5 M5.5 15 H18.5 M5.5 19 H18.5" stroke="#4a78bd" stroke-width="1.8"/></svg>
<span style="left:1844.5px;top:236.4px;font:400 26px/26px 'Liberation Sans',sans-serif;color:#333;white-space:pre;transform:scaleX(0.9092);transform-origin:0 0;">Calendar:</span>
<span style="left:1964.5px;top:234.9px;font:400 26px/26px 'Liberation Sans',sans-serif;color:#000;white-space:pre;transform:scaleX(0.8345);transform-origin:0 0;">DAY</span>
<div style="left:1962px;top:265.5px;width:175px;height:1.8px;background:repeating-linear-gradient(90deg,#d0d0d0 0 6.2px,transparent 6.2px 12.2px);"></div>
<span style="left:2249.5px;top:236.4px;font:400 26px/26px 'Liberation Sans',sans-serif;color:#333;white-space:pre;transform:scaleX(0.9367);transform-origin:0 0;">Shift:</span>
<span style="left:2322.5px;top:234.9px;font:400 26px/26px 'Liberation Sans',sans-serif;color:#000;white-space:pre;transform:scaleX(0.8345);transform-origin:0 0;">DAY</span>
<div style="left:2320px;top:265.5px;width:175px;height:1.8px;background:repeating-linear-gradient(90deg,#d0d0d0 0 6.2px,transparent 6.2px 12.2px);"></div>
<span style="left:723.6px;top:338.4px;font:400 26px/26px 'Liberation Sans',sans-serif;color:#333;white-space:pre;transform:scaleX(0.9076);transform-origin:0 0;">Date:</span>
<div style="left:798px;top:334.3px;width:106px;height:29.5px;background:#b4d4fa;"></div>
<span style="left:800px;top:336.4px;font:400 26px/26px 'Liberation Sans',sans-serif;color:#000;letter-spacing:0.34px;white-space:pre;">17/05/21</span>
<div style="left:795px;top:367.5px;width:173.5px;height:2.5px;background:#4a78bd;"></div>
<svg style="left:986.3px;top:335px;" width="30" height="27.5" viewBox="0 0 30 27.5"><rect x="0" y="3.5" width="30" height="24" fill="#4a78bd"/><rect x="5" y="0" width="3.2" height="6" fill="#4a78bd"/><rect x="21.8" y="0" width="3.2" height="6" fill="#4a78bd"/><rect x="3.0" y="9.5" width="4.4" height="6.2" fill="#fff"/><rect x="3.0" y="17.7" width="4.4" height="6.2" fill="#fff"/><rect x="9.5" y="9.5" width="4.4" height="6.2" fill="#fff"/><rect x="9.5" y="17.7" width="4.4" height="6.2" fill="#fff"/><rect x="16.0" y="9.5" width="4.4" height="6.2" fill="#fff"/><rect x="16.0" y="17.7" width="4.4" height="6.2" fill="#fff"/><rect x="22.5" y="9.5" width="4.4" height="6.2" fill="#fff"/><rect x="22.5" y="17.7" width="4.4" height="6.2" fill="#fff"/></svg>
<div style="left:2574.5px;top:112.5px;width:29px;height:1511px;background:#fafafa;border-left:2px solid #e9e9e9;border-right:2px solid #e9e9e9;box-sizing:border-box"></div>
<div style="left:2582.5px;top:117.5px;width:15.5px;height:958.5px;background:#c1c1c1;border-radius:8px"></div>
<div style="left:707.5px;top:1594.5px;width:1896px;height:29px;background:#fafafa;border-top:2px solid #e9e9e9;border-bottom:2px solid #e9e9e9;box-sizing:border-box"></div>
<div style="left:714px;top:1602px;width:1834px;height:15.5px;background:#c1c1c1;border-radius:8px"></div>
<div style="left:720px;top:433.8px;width:1854px;height:90.3px;background:#ebebeb;"></div>
<div style="left:720px;top:524.1px;width:1854px;height:1.8px;background:#a2a2a2;"></div>
<span style="left:734.5px;top:468.2px;font:400 26px/26px 'Liberation Sans',sans-serif;color:#161616;white-space:pre;transform:scaleX(0.9090);transform-origin:0 0;">Required Crafts</span>
<div style="left:930.1px;top:433.8px;width:1.6px;height:90.3px;background:#dcdcdc;"></div>
<div style="left:1217.7px;top:433.8px;width:1.6px;height:90.3px;background:#dcdcdc;"></div>
<div style="left:1304px;top:433.8px;width:1.6px;height:90.3px;background:#dcdcdc;"></div>
<div style="left:1510.1px;top:433.8px;width:1.6px;height:90.3px;background:#dcdcdc;"></div>
<svg style="left:958px;top:464.3px;" width="24" height="24" viewBox="0 0 24 24"><path d="M1.5 2 H21.5 L13.5 11.5 V21 L9.5 17.5 V11.5 Z" fill="none" stroke="#4a78bd" stroke-width="2.8" stroke-linejoin="round"/><path d="M12 10 L20 6 L14 21 L10 17 Z" fill="#4a78bd"/></svg>
<span style="left:1012px;top:469.7px;font:400 24px/24px 'Liberation Sans',sans-serif;color:#335f93;letter-spacing:0.33px;white-space:pre;text-decoration:underline;text-decoration-thickness:1.6px;text-underline-offset:2.5px">Filter</span>
<svg style="left:1107px;top:470.3px;" width="14" height="18" viewBox="0 0 14 18"><path d="M2.5 2 L10.5 8.5 L2.5 15" fill="none" stroke="#8b8678" stroke-width="2.9"/></svg>
<svg style="left:1157px;top:461.8px;" width="30" height="30" viewBox="0 0 30 30"><circle cx="11" cy="11" r="8" fill="none" stroke="#dedede" stroke-width="3"/><path d="M17 17 L20 20" stroke="#dedede" stroke-width="3"/><path d="M19.5 19.5 L26 26" stroke="#dedede" stroke-width="5"/></svg>
<svg style="left:1244px;top:462.3px;" width="30" height="30" viewBox="0 0 30 30"><path d="M2 2 H24 L15.5 12 V22 L11 18.5 V12 Z" fill="none" stroke="#dedede" stroke-width="2.6" stroke-linejoin="round"/><circle cx="20.5" cy="21" r="6" fill="#ebebeb" stroke="#dedede" stroke-width="2.2"/><path d="M18 18.5 L23 23.5 M23 18.5 L18 23.5" stroke="#dedede" stroke-width="1.8"/></svg>
<svg style="left:1358.8px;top:461.2px;" width="30" height="30" viewBox="0 0 30 30"><g transform="rotate(0 15 15)"><path d="M15 27.5 V7 M5 16 L15 6 L25 16" fill="none" stroke="#dedede" stroke-width="5"/></g></svg>
<svg style="left:1448.6px;top:461.2px;" width="30" height="30" viewBox="0 0 30 30"><g transform="rotate(180 15 15)"><path d="M15 27.5 V7 M5 16 L15 6 L25 16" fill="none" stroke="#4a78bd" stroke-width="5"/></g></svg>
<svg style="left:1534.5px;top:461.2px;" width="30" height="30" viewBox="0 0 30 30"><g transform="rotate(270 15 15)"><path d="M15 27.5 V7 M5 16 L15 6 L25 16" fill="none" stroke="#dedede" stroke-width="5"/></g></svg>
<span style="left:1591.7px;top:468.0px;font:400 27px/27px 'Liberation Mono',monospace;color:#111;letter-spacing:-2.11px;white-space:pre;">1 - 3 of 3</span>
<svg style="left:1768.7px;top:461.2px;" width="30" height="30" viewBox="0 0 30 30"><g transform="rotate(90 15 15)"><path d="M15 27.5 V7 M5 16 L15 6 L25 16" fill="none" stroke="#dedede" stroke-width="5"/></g></svg>
<svg style="left:2446px;top:462.8px;" width="34" height="33" viewBox="0 0 34 33"><path d="M17.1 0.2 V20 M8 11.5 L17.1 20.6 L26.2 11.5" fill="none" stroke="#4a78bd" stroke-width="3.9"/><path d="M2.9 18.3 V29.9 H30.6 V18.3" fill="none" stroke="#4a78bd" stroke-width="4"/></svg>
<div style="left:2525.5px;top:433.8px;width:1.6px;height:90.3px;background:#dcdcdc;"></div>
<svg style="left:2552px;top:463.3px;" width="22" height="25" viewBox="0 0 22 25"><rect x="0" y="0" width="26" height="25" fill="#4a78bd"/><path d="M12.3 9.8 L6 16.8" fill="none" stroke="#e6edf7" stroke-width="2.3"/><path d="M3.3 12 V19.3 H11 Z" fill="#e6edf7"/></svg>
<div style="left:720px;top:535px;width:1854px;height:90px;background:#f9f9f9;"></div>
<span style="left:809.5px;top:567.9px;font:700 26px/26px 'Liberation Sans',sans-serif;color:#404040;white-space:pre;transform:scaleX(0.9839);transform-origin:0 0;">Position</span>
<span style="left:989px;top:567.9px;font:700 26px/26px 'Liberation Sans',sans-serif;color:#404040;letter-spacing:0.08px;white-space:pre;">Craft</span>
<span style="left:1129px;top:567.9px;font:700 26px/26px 'Liberation Sans',sans-serif;color:#404040;letter-spacing:0.16px;white-space:pre;">Skill Level</span>
<span style="left:1328px;top:567.9px;font:700 26px/26px 'Liberation Sans',sans-serif;color:#404040;letter-spacing:0.07px;white-space:pre;">Description</span>
<span style="left:1754.8px;top:567.9px;font:700 26px/26px 'Liberation Sans',sans-serif;color:#404040;white-space:pre;transform:scaleX(0.9822);transform-origin:0 0;">Remarks</span>
<span style="left:2198.5px;top:567.9px;font:700 26px/26px 'Liberation Sans',sans-serif;color:#404040;white-space:pre;transform:scaleX(0.9996);transform-origin:0 0;">Vendor</span>
<div style="left:720px;top:625px;width:1854px;height:70px;background:#e0f0f8;"></div>
<div style="left:720px;top:694.5px;width:1854px;height:70px;background:#f7f7f7;"></div>
<svg style="left:749.3px;top:649.8px;" width="16.4" height="22.4" viewBox="0 0 16.4 22.4"><path d="M3 3 L12.4 11.2 L3 19.4" fill="none" stroke="#4a78bd" stroke-width="4.2"/></svg>
<svg style="left:749.3px;top:720.3px;" width="16.4" height="22.4" viewBox="0 0 16.4 22.4"><path d="M3 3 L12.4 11.2 L3 19.4" fill="none" stroke="#4a78bd" stroke-width="4.2"/></svg>
<svg style="left:749.3px;top:790.3px;" width="16.4" height="22.4" viewBox="0 0 16.4 22.4"><path d="M3 3 L12.4 11.2 L3 19.4" fill="none" stroke="#4a78bd" stroke-width="4.2"/></svg>
<span style="left:805.6px;top:650.2px;font:400 28px/28px 'Liberation Sans',sans-serif;color:#000;white-space:pre;transform:scaleX(0.9207);transform-origin:0 0;">DRIVER</span>
<span style="left:985.3px;top:650.2px;font:400 28px/28px 'Liberation Sans',sans-serif;color:#000;white-space:pre;transform:scaleX(0.9235);transform-origin:0 0;">DRIVER</span>
<span style="left:1323.8px;top:650.2px;font:400 28px/28px 'Liberation Sans',sans-serif;color:#000;letter-spacing:0.07px;white-space:pre;">Driver</span>
<span style="left:2333px;top:650.2px;font:400 28px/28px 'Liberation Sans',sans-serif;color:#000;white-space:pre;transform:scaleX(0.8899);transform-origin:0 0;">OK</span>
<span style="left:805.6px;top:720.2px;font:400 28px/28px 'Liberation Sans',sans-serif;color:#000;white-space:pre;transform:scaleX(0.8872);transform-origin:0 0;">HELPER</span>
<span style="left:985.3px;top:720.2px;font:400 28px/28px 'Liberation Sans',sans-serif;color:#000;white-space:pre;transform:scaleX(0.8720);transform-origin:0 0;">ELECT</span>
<span style="left:1125.5px;top:720.2px;font:400 28px/28px 'Liberation Sans',sans-serif;color:#000;white-space:pre;transform:scaleX(0.8931);transform-origin:0 0;">SECONDCLASS</span>
<span style="left:1323.8px;top:720.2px;font:400 28px/28px 'Liberation Sans',sans-serif;color:#000;letter-spacing:0.20px;white-space:pre;">Electrician</span>
<span style="left:2333px;top:720.2px;font:400 28px/28px 'Liberation Sans',sans-serif;color:#000;white-space:pre;transform:scaleX(0.9127);transform-origin:0 0;">REQ NOT MET</span>
<span style="left:805.6px;top:789.7px;font:400 28px/28px 'Liberation Sans',sans-serif;color:#000;white-space:pre;transform:scaleX(0.8872);transform-origin:0 0;">LEADER</span>
<span style="left:985.3px;top:789.7px;font:400 28px/28px 'Liberation Sans',sans-serif;color:#000;white-space:pre;transform:scaleX(0.8720);transform-origin:0 0;">ELECT</span>
<span style="left:1125.5px;top:789.7px;font:400 28px/28px 'Liberation Sans',sans-serif;color:#000;white-space:pre;transform:scaleX(0.9062);transform-origin:0 0;">FIRSTCLASS</span>
<span style="left:1323.8px;top:789.7px;font:400 28px/28px 'Liberation Sans',sans-serif;color:#000;letter-spacing:0.20px;white-space:pre;">Electrician</span>
<span style="left:2333px;top:789.7px;font:400 28px/28px 'Liberation Sans',sans-serif;color:#000;white-space:pre;transform:scaleX(0.9418);transform-origin:0 0;">MULTIPLE</span>
<div style="left:720px;top:865px;width:1854px;height:90.3px;background:#ebebeb;"></div>
<div style="left:720px;top:955.3px;width:1854px;height:1.8px;background:#a2a2a2;"></div>
<span style="left:734.5px;top:899.4px;font:400 26px/26px 'Liberation Sans',sans-serif;color:#161616;white-space:pre;transform:scaleX(0.9282);transform-origin:0 0;">Required Qualifications</span>
<div style="left:1013.2px;top:865px;width:1.6px;height:90.3px;background:#dcdcdc;"></div>
<div style="left:1300.8px;top:865px;width:1.6px;height:90.3px;background:#dcdcdc;"></div>
<div style="left:1387.1px;top:865px;width:1.6px;height:90.3px;background:#dcdcdc;"></div>
<div style="left:1593.2px;top:865px;width:1.6px;height:90.3px;background:#dcdcdc;"></div>
<svg style="left:1041.1px;top:895.5px;" width="24" height="24" viewBox="0 0 24 24"><path d="M1.5 2 H21.5 L13.5 11.5 V21 L9.5 17.5 V11.5 Z" fill="none" stroke="#4a78bd" stroke-width="2.8" stroke-linejoin="round"/><path d="M12 10 L20 6 L14 21 L10 17 Z" fill="#4a78bd"/></svg>
<span style="left:1095.1px;top:900.9px;font:400 24px/24px 'Liberation Sans',sans-serif;color:#335f93;letter-spacing:0.33px;white-space:pre;text-decoration:underline;text-decoration-thickness:1.6px;text-underline-offset:2.5px">Filter</span>
<svg style="left:1190.1px;top:901.5px;" width="14" height="18" viewBox="0 0 14 18"><path d="M2.5 2 L10.5 8.5 L2.5 15" fill="none" stroke="#8b8678" stroke-width="2.9"/></svg>
<svg style="left:1240.1px;top:893px;" width="30" height="30" viewBox="0 0 30 30"><circle cx="11" cy="11" r="8" fill="none" stroke="#dedede" stroke-width="3"/><path d="M17 17 L20 20" stroke="#dedede" stroke-width="3"/><path d="M19.5 19.5 L26 26" stroke="#dedede" stroke-width="5"/></svg>
<svg style="left:1327.1px;top:893.5px;" width="30" height="30" viewBox="0 0 30 30"><path d="M2 2 H24 L15.5 12 V22 L11 18.5 V12 Z" fill="none" stroke="#dedede" stroke-width="2.6" stroke-linejoin="round"/><circle cx="20.5" cy="21" r="6" fill="#ebebeb" stroke="#dedede" stroke-width="2.2"/><path d="M18 18.5 L23 23.5 M23 18.5 L18 23.5" stroke="#dedede" stroke-width="1.8"/></svg>
<svg style="left:1441.9px;top:892.4px;" width="30" height="30" viewBox="0 0 30 30"><g transform="rotate(0 15 15)"><path d="M15 27.5 V7 M5 16 L15 6 L25 16" fill="none" stroke="#dedede" stroke-width="5"/></g></svg>
<svg style="left:1531.7px;top:892.4px;" width="30" height="30" viewBox="0 0 30 30"><g transform="rotate(180 15 15)"><path d="M15 27.5 V7 M5 16 L15 6 L25 16" fill="none" stroke="#4a78bd" stroke-width="5"/></g></svg>
<svg style="left:1617.6px;top:892.4px;" width="30" height="30" viewBox="0 0 30 30"><g transform="rotate(270 15 15)"><path d="M15 27.5 V7 M5 16 L15 6 L25 16" fill="none" stroke="#dedede" stroke-width="5"/></g></svg>
<span style="left:1674.8px;top:899.2px;font:400 27px/27px 'Liberation Mono',monospace;color:#111;letter-spacing:-2.11px;white-space:pre;">1 - 3 of 3</span>
<svg style="left:1851.8px;top:892.4px;" width="30" height="30" viewBox="0 0 30 30"><g transform="rotate(90 15 15)"><path d="M15 27.5 V7 M5 16 L15 6 L25 16" fill="none" stroke="#dedede" stroke-width="5"/></g></svg>
<svg style="left:2446.6px;top:894px;" width="34" height="33" viewBox="0 0 34 33"><path d="M17.1 0.2 V20 M8 11.5 L17.1 20.6 L26.2 11.5" fill="none" stroke="#4a78bd" stroke-width="3.9"/><path d="M2.9 18.3 V29.9 H30.6 V18.3" fill="none" stroke="#4a78bd" stroke-width="4"/></svg>
<div style="left:2525.5px;top:865px;width:1.6px;height:90.3px;background:#dcdcdc;"></div>
<svg style="left:2552px;top:894.5px;" width="22" height="25" viewBox="0 0 22 25"><rect x="0" y="0" width="26" height="25" fill="#4a78bd"/><path d="M12.3 9.8 L6 16.8" fill="none" stroke="#e6edf7" stroke-width="2.3"/><path d="M3.3 12 V19.3 H11 Z" fill="#e6edf7"/></svg>
<div style="left:720px;top:966px;width:1854px;height:90px;background:#f9f9f9;"></div>
<span style="left:806px;top:998.9px;font:700 26px/26px 'Liberation Sans',sans-serif;color:#404040;white-space:pre;transform:scaleX(0.9800);transform-origin:0 0;">Position</span>
<span style="left:972.5px;top:998.9px;font:700 26px/26px 'Liberation Sans',sans-serif;color:#404040;white-space:pre;transform:scaleX(0.9474);transform-origin:0 0;">Tool?</span>
<span style="left:1076.6px;top:998.9px;font:700 26px/26px 'Liberation Sans',sans-serif;color:#404040;letter-spacing:0.18px;white-space:pre;">Qualification ID</span>
<span style="left:1286px;top:998.9px;font:700 26px/26px 'Liberation Sans',sans-serif;color:#404040;white-space:pre;transform:scaleX(0.9998);transform-origin:0 0;">Description</span>
<span style="left:1787px;top:998.9px;font:700 26px/26px 'Liberation Sans',sans-serif;color:#404040;letter-spacing:0.14px;white-space:pre;">Quantity</span>
<span style="left:1923px;top:998.9px;font:700 26px/26px 'Liberation Sans',sans-serif;color:#404040;white-space:pre;transform:scaleX(0.9713);transform-origin:0 0;">Remarks</span>
<div style="left:720px;top:1055.8px;width:1854px;height:70px;background:#e0f0f8;"></div>
<div style="left:720px;top:1126px;width:1854px;height:70px;background:#f7f7f7;"></div>
<svg style="left:749.3px;top:1080.8px;" width="16.4" height="22.4" viewBox="0 0 16.4 22.4"><path d="M3 3 L12.4 11.2 L3 19.4" fill="none" stroke="#4a78bd" stroke-width="4.2"/></svg>
<svg style="left:749.3px;top:1150.8px;" width="16.4" height="22.4" viewBox="0 0 16.4 22.4"><path d="M3 3 L12.4 11.2 L3 19.4" fill="none" stroke="#4a78bd" stroke-width="4.2"/></svg>
<svg style="left:749.3px;top:1220.8px;" width="16.4" height="22.4" viewBox="0 0 16.4 22.4"><path d="M3 3 L12.4 11.2 L3 19.4" fill="none" stroke="#4a78bd" stroke-width="4.2"/></svg>
<svg style="left:971.5px;top:1083.5px;" width="29" height="29" viewBox="0 0 29 29"><rect x="0.8" y="0.8" width="27.4" height="27.4" rx="1" fill="#e3e3e3" stroke="#adadad" stroke-width="1.4"/></svg>
<svg style="left:971.5px;top:1153.5px;" width="29" height="29" viewBox="0 0 29 29"><rect x="0.8" y="0.8" width="27.4" height="27.4" fill="#9a9a9a" stroke="#909090" stroke-width="1.4"/><path d="M4.5 15.5 L11.5 22 L24.5 8" fill="none" stroke="#fff" stroke-width="3"/></svg>
<svg style="left:971.5px;top:1223.5px;" width="29" height="29" viewBox="0 0 29 29"><rect x="0.8" y="0.8" width="27.4" height="27.4" rx="1" fill="#e3e3e3" stroke="#adadad" stroke-width="1.4"/></svg>
<span style="left:802px;top:1081.2px;font:400 28px/28px 'Liberation Sans',sans-serif;color:#000;white-space:pre;transform:scaleX(0.9263);transform-origin:0 0;">DRIVER</span>
<span style="left:1072.7px;top:1081.2px;font:400 28px/28px 'Liberation Sans',sans-serif;color:#000;white-space:pre;transform:scaleX(0.8949);transform-origin:0 0;">HGV</span>
<span style="left:1282.3px;top:1081.2px;font:400 28px/28px 'Liberation Sans',sans-serif;color:#000;white-space:pre;transform:scaleX(0.9777);transform-origin:0 0;">Heavy Goods Vehicle License</span>
<span style="left:2333px;top:1081.2px;font:400 28px/28px 'Liberation Sans',sans-serif;color:#000;white-space:pre;transform:scaleX(0.8899);transform-origin:0 0;">OK</span>
<span style="left:1072.7px;top:1151.2px;font:400 28px/28px 'Liberation Sans',sans-serif;color:#000;white-space:pre;transform:scaleX(0.9034);transform-origin:0 0;">BTRUCK</span>
<span style="left:1282.3px;top:1151.2px;font:400 28px/28px 'Liberation Sans',sans-serif;color:#000;letter-spacing:0.08px;white-space:pre;">Bucket Truck Operator</span>
<span style="left:1918.6px;top:1151.2px;font:400 28px/28px 'Liberation Sans',sans-serif;color:#000;letter-spacing:0.13px;white-space:pre;">Tool Requirement</span>
<span style="left:2333px;top:1151.2px;font:400 28px/28px 'Liberation Sans',sans-serif;color:#000;white-space:pre;transform:scaleX(0.8899);transform-origin:0 0;">OK</span>
<span style="left:1072.7px;top:1220.7px;font:400 28px/28px 'Liberation Sans',sans-serif;color:#000;white-space:pre;transform:scaleX(0.9651);transform-origin:0 0;">FIRSTAID</span>
<span style="left:1282.3px;top:1220.7px;font:400 28px/28px 'Liberation Sans',sans-serif;color:#000;letter-spacing:0.05px;white-space:pre;">First Aid at Work</span>
<span style="left:1878px;top:1220.7px;font:400 28px/28px 'Liberation Sans',sans-serif;color:#000;white-space:pre;">2</span>
<span style="left:2333px;top:1220.7px;font:400 28px/28px 'Liberation Sans',sans-serif;color:#000;white-space:pre;transform:scaleX(0.9562);transform-origin:0 0;">NOT QUALIFIED</span>
<div style="left:0;top:535px;width:2574px;height:90px;overflow:hidden;background:none">
<span style="left:2337px;top:32.9px;font:700 26px/26px 'Liberation Sans',sans-serif;color:#404040;letter-spacing:0.61px;white-space:pre;">Requirement Status</span>
</div>
<div style="left:0;top:966px;width:2574px;height:90px;overflow:hidden;background:none">
<span style="left:2337px;top:32.9px;font:700 26px/26px 'Liberation Sans',sans-serif;color:#404040;letter-spacing:0.61px;white-space:pre;">Requirement Status</span>
</div>
<div style="left:720px;top:1296px;width:1469px;height:90.3px;background:#ebebeb;"></div>
<div style="left:720px;top:1386.3px;width:1469px;height:1.8px;background:#a2a2a2;"></div>
<span style="left:734.5px;top:1330.4px;font:400 26px/26px 'Liberation Sans',sans-serif;color:#161616;white-space:pre;transform:scaleX(0.9164);transform-origin:0 0;">Required Tools</span>
<div style="left:922.3px;top:1296px;width:1.6px;height:90.3px;background:#dcdcdc;"></div>
<div style="left:1209.9px;top:1296px;width:1.6px;height:90.3px;background:#dcdcdc;"></div>
<div style="left:1296.2px;top:1296px;width:1.6px;height:90.3px;background:#dcdcdc;"></div>
<div style="left:1502.3px;top:1296px;width:1.6px;height:90.3px;background:#dcdcdc;"></div>
<svg style="left:950.2px;top:1326.5px;" width="24" height="24" viewBox="0 0 24 24"><path d="M1.5 2 H21.5 L13.5 11.5 V21 L9.5 17.5 V11.5 Z" fill="none" stroke="#4a78bd" stroke-width="2.8" stroke-linejoin="round"/><path d="M12 10 L20 6 L14 21 L10 17 Z" fill="#4a78bd"/></svg>
<span style="left:1004.2px;top:1331.9px;font:400 24px/24px 'Liberation Sans',sans-serif;color:#335f93;letter-spacing:0.33px;white-space:pre;text-decoration:underline;text-decoration-thickness:1.6px;text-underline-offset:2.5px">Filter</span>
<svg style="left:1099.2px;top:1332.5px;" width="14" height="18" viewBox="0 0 14 18"><path d="M2.5 2 L10.5 8.5 L2.5 15" fill="none" stroke="#8b8678" stroke-width="2.9"/></svg>
<svg style="left:1149.2px;top:1324px;" width="30" height="30" viewBox="0 0 30 30"><circle cx="11" cy="11" r="8" fill="none" stroke="#dedede" stroke-width="3"/><path d="M17 17 L20 20" stroke="#dedede" stroke-width="3"/><path d="M19.5 19.5 L26 26" stroke="#dedede" stroke-width="5"/></svg>
<svg style="left:1236.2px;top:1324.5px;" width="30" height="30" viewBox="0 0 30 30"><path d="M2 2 H24 L15.5 12 V22 L11 18.5 V12 Z" fill="none" stroke="#dedede" stroke-width="2.6" stroke-linejoin="round"/><circle cx="20.5" cy="21" r="6" fill="#ebebeb" stroke="#dedede" stroke-width="2.2"/><path d="M18 18.5 L23 23.5 M23 18.5 L18 23.5" stroke="#dedede" stroke-width="1.8"/></svg>
<svg style="left:1351px;top:1323.4px;" width="30" height="30" viewBox="0 0 30 30"><g transform="rotate(0 15 15)"><path d="M15 27.5 V7 M5 16 L15 6 L25 16" fill="none" stroke="#dedede" stroke-width="5"/></g></svg>
<svg style="left:1440.8px;top:1323.4px;" width="30" height="30" viewBox="0 0 30 30"><g transform="rotate(180 15 15)"><path d="M15 27.5 V7 M5 16 L15 6 L25 16" fill="none" stroke="#dedede" stroke-width="5"/></g></svg>
<svg style="left:1526.7px;top:1323.4px;" width="30" height="30" viewBox="0 0 30 30"><g transform="rotate(270 15 15)"><path d="M15 27.5 V7 M5 16 L15 6 L25 16" fill="none" stroke="#dedede" stroke-width="5"/></g></svg>
<span style="left:1583.9px;top:1330.2px;font:400 27px/27px 'Liberation Mono',monospace;color:#111;letter-spacing:-2.11px;white-space:pre;">1 - 1 of 1</span>
<svg style="left:1760.9px;top:1323.4px;" width="30" height="30" viewBox="0 0 30 30"><g transform="rotate(90 15 15)"><path d="M15 27.5 V7 M5 16 L15 6 L25 16" fill="none" stroke="#dedede" stroke-width="5"/></g></svg>
<svg style="left:2043px;top:1325px;" width="34" height="33" viewBox="0 0 34 33"><path d="M17.1 0.2 V20 M8 11.5 L17.1 20.6 L26.2 11.5" fill="none" stroke="#4a78bd" stroke-width="3.9"/><path d="M2.9 18.3 V29.9 H30.6 V18.3" fill="none" stroke="#4a78bd" stroke-width="4"/></svg>
<div style="left:2121.2px;top:1296px;width:1.6px;height:90.3px;background:#dcdcdc;"></div>
<svg style="left:2148px;top:1325.5px;" width="26" height="25" viewBox="0 0 26 25"><rect x="0" y="0" width="26" height="25" fill="#4a78bd"/><path d="M12.3 9.8 L6 16.8" fill="none" stroke="#e6edf7" stroke-width="2.3"/><path d="M3.3 12 V19.3 H11 Z" fill="#e6edf7"/></svg>
<div style="left:720px;top:1397.5px;width:1469px;height:90px;background:#f9f9f9;"></div>
<span style="left:826px;top:1430.4px;font:700 26px/26px 'Liberation Sans',sans-serif;color:#404040;letter-spacing:0.03px;white-space:pre;">Tool Sequence</span>
<span style="left:1068px;top:1430.4px;font:700 26px/26px 'Liberation Sans',sans-serif;color:#404040;white-space:pre;transform:scaleX(0.9898);transform-origin:0 0;">Tool</span>
<span style="left:1241.5px;top:1430.4px;font:700 26px/26px 'Liberation Sans',sans-serif;color:#404040;letter-spacing:0.05px;white-space:pre;">Description</span>
<span style="left:1932.6px;top:1430.4px;font:700 26px/26px 'Liberation Sans',sans-serif;color:#404040;letter-spacing:0.16px;white-space:pre;">Requirement Status</span>
<div style="left:720px;top:1487px;width:1469px;height:70px;background:#e0f0f8;"></div>
<svg style="left:749.3px;top:1512.3px;" width="16.4" height="22.4" viewBox="0 0 16.4 22.4"><path d="M3 3 L12.4 11.2 L3 19.4" fill="none" stroke="#4a78bd" stroke-width="4.2"/></svg>
<span style="left:822px;top:1512.7px;font:400 28px/28px 'Liberation Sans',sans-serif;color:#000;white-space:pre;transform:scaleX(0.9289);transform-origin:0 0;">BTRUCK1</span>
<span style="left:1065px;top:1512.7px;font:400 28px/28px 'Liberation Sans',sans-serif;color:#000;white-space:pre;transform:scaleX(0.9067);transform-origin:0 0;">BOSBTRUCK</span>
<span style="left:1237.6px;top:1512.7px;font:400 28px/28px 'Liberation Sans',sans-serif;color:#000;white-space:pre;transform:scaleX(0.9995);transform-origin:0 0;">Bucket Truck used by overhead line crews</span>
<span style="left:1928.7px;top:1512.7px;font:400 28px/28px 'Liberation Sans',sans-serif;color:#000;white-space:pre;transform:scaleX(0.8973);transform-origin:0 0;">OK</span>
<div style="left:720px;top:1587px;width:1854px;height:8px;background:#ebebeb;"></div>
<div style="left:928px;top:1587px;width:1.6px;height:8px;background:#dcdcdc;"></div>
<div style="left:1215.5px;top:1587px;width:1.6px;height:8px;background:#dcdcdc;"></div>
<div style="left:1301.7px;top:1587px;width:1.6px;height:8px;background:#dcdcdc;"></div>
<div style="left:1507.5px;top:1587px;width:1.6px;height:8px;background:#dcdcdc;"></div>
<div style="left:2526px;top:1587px;width:1.6px;height:8px;background:#dcdcdc;"></div>
<div style="left:2488.5px;top:1648px;width:91.5px;height:69.5px;background:#4b78bc;"></div>
<span style="left:2518px;top:1670.9px;font:400 24px/24px 'Liberation Sans',sans-serif;color:#fff;white-space:pre;transform:scaleX(0.8940);transform-origin:0 0;">OK</span>
<div style="left:0px;top:1772px;width:3322px;height:4px;background:#9b9b9b;"></div>
<div style="left:0px;top:1772px;width:520px;height:4px;background:#1d0f2c;"></div>
<svg style="left:0;top:1750px" width="22" height="22" viewBox="0 0 22 22"><path d="M0 0 V22 H22 A22 22 0 0 1 0 0Z" fill="#1d0f2c"/></svg>
<svg style="left:3300px;top:1750px" width="22" height="22" viewBox="0 0 22 22"><path d="M22 0 V22 H0 A22 22 0 0 0 22 0Z" fill="#9b9b9b"/></svg>
</body></html>
